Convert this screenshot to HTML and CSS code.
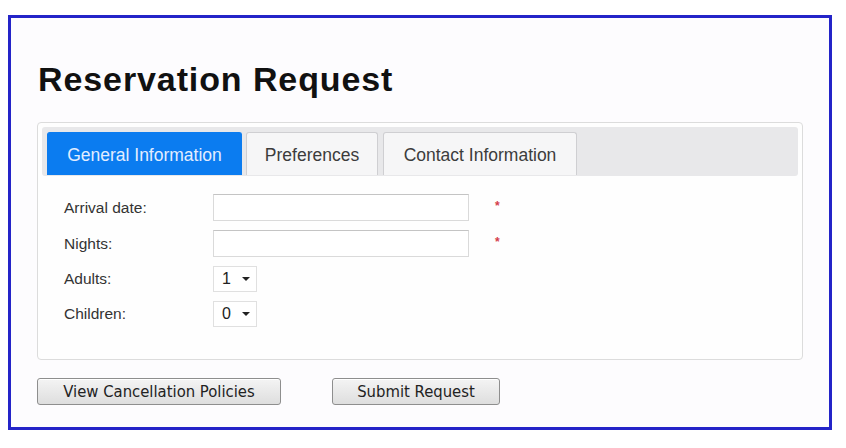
FILE: index.html
```html
<!DOCTYPE html>
<html>
<head>
<meta charset="utf-8">
<link rel="stylesheet" href="styles.css">
</head>
<body>
<div class="frame">
  <h1 class="title">Reservation Request</h1>
  <div class="panel">
    <div class="tabstrip">
      <div class="tab tab-general active">General Information</div>
      <div class="tab tab-prefs">Preferences</div>
      <div class="tab tab-contact">Contact Information</div>
    </div>
    <div class="form">
      <div class="row">
        <label class="label">Arrival date:</label>
        <div class="input"></div>
        <span class="req">*</span>
      </div>
      <div class="row">
        <label class="label">Nights:</label>
        <div class="input"></div>
        <span class="req">*</span>
      </div>
      <div class="row">
        <label class="label">Adults:</label>
        <div class="select"><span>1</span><span class="caret"></span></div>
      </div>
      <div class="row">
        <label class="label">Children:</label>
        <div class="select"><span>0</span><span class="caret"></span></div>
      </div>
    </div>
  </div>
  <div class="buttons">
    <div class="btn btn-wide">View Cancellation Policies</div>
    <div class="btn btn-submit">Submit Request</div>
  </div>
</div>
</body>
</html>
```

FILE: styles.css
```css
html, body {
  margin: 0;
  padding: 0;
  background: #ffffff;
}
body {
  font-family: "Liberation Sans", Arial, sans-serif;
  color: #222;
}
.frame {
  margin: 15px 0 0 8px;
  width: 818px;
  height: 409px;
  border: 3px solid #2424c8;
  background: #fdfcfe;
  padding: 0;
  box-sizing: content-box;
}
.title {
  margin: 42px 0 0 27px;
  font-size: 34px;
  line-height: 38px;
  font-weight: bold;
  color: #111;
  letter-spacing: 0.9px;
  height: 62px;
}
.panel {
  margin: 0 26px 0 26px;
  border: 1px solid #dcdcdc;
  border-radius: 4px;
  padding: 4px;
  height: 228px;
  background: #fefefe;
}
.tabstrip {
  background: #e8e8ea;
  border-radius: 3px;
  padding: 5px 0 0 5px;
  display: flex;
  gap: 4px;
  height: 44px;
}
.tab {
  height: 43px;
  line-height: 44px;
  font-size: 17.5px;
  color: #3c3c3c;
  background: #f6f6f7;
  border: 1px solid #cfcfd2;
  border-bottom: none;
  border-radius: 3px 3px 0 0;
  white-space: nowrap;
  text-align: center;
  box-sizing: border-box;
}
.tab-general {
  width: 195px;
}
.tab-prefs {
  width: 132px;
}
.tab-contact {
  width: 194px;
  margin-left: 1px;
}
.tab.active {
  background: #0b7cf0;
  border-color: #0b7cf0;
  color: #e2edff;
}
.form {
  padding: 18px 0 0 22px;
  display: flex;
  flex-direction: column;
  gap: 9px;
}
.row {
  display: flex;
  align-items: center;
  height: 27px;
}
.row:nth-child(3), .row:nth-child(4) {
  height: 26px;
}
.label {
  width: 149px;
  font-size: 15.5px;
  color: #333;
}
.input {
  width: 254px;
  height: 25px;
  border: 1px solid #dadada;
  border-top-color: #c4c4c4;
  background: #fff;
}
.req {
  margin-left: 26px;
  color: #d43c4c;
  font-size: 12px;
  font-weight: bold;
  margin-top: -4px;
}
.select {
  height: 24px;
  border: 1px solid #e0e0e0;
  background: #fff;
  display: flex;
  align-items: center;
  font-size: 16px;
  color: #222;
  padding-left: 8px;
  box-sizing: content-box;
  width: 34px;
}
.caret {
  margin-left: 11px;
  width: 0;
  height: 0;
  border-left: 4px solid transparent;
  border-right: 4px solid transparent;
  border-top: 4px solid #222;
}
.buttons {
  display: flex;
  gap: 51px;
  margin: 18px 0 0 26px;
}
.btn {
  height: 25px;
  line-height: 25px;
  border: 1px solid #8e8e8e;
  border-radius: 3px;
  background: linear-gradient(#f4f4f4, #dedede);
  font-family: "DejaVu Sans Condensed", "DejaVu Sans", sans-serif;
  font-size: 16.5px;
  color: #222;
  text-align: center;
  box-shadow: inset 0 1px 0 #fff;
  white-space: nowrap;
}
.btn-wide {
  width: 242px;
}
.btn-submit {
  width: 166px;
}
```
